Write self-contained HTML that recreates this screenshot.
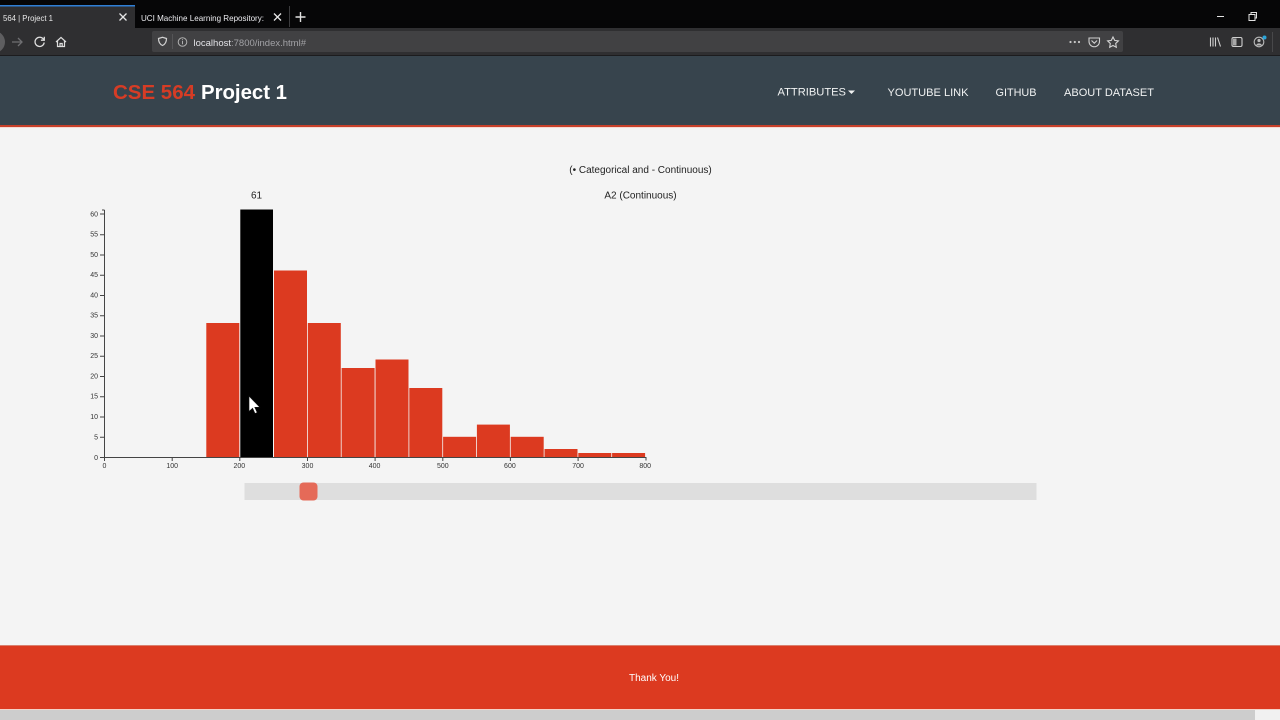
<!DOCTYPE html>
<html>
<head>
<meta charset="utf-8">
<style>
html,body{margin:0;padding:0;background:#f4f4f4;overflow:hidden}
body{width:1280px;height:720px;position:relative;font-family:"Liberation Sans",sans-serif}
svg{position:absolute;left:0;top:0}
</style>
</head>
<body>
<svg width="1280" height="720" viewBox="0 0 1280 720" font-family="Liberation Sans, sans-serif">
<!-- browser chrome -->
<rect x="0" y="0" width="1280" height="28" fill="#060607"/>
<rect x="0" y="28" width="1280" height="27" fill="#2f2f31"/>
<rect x="0" y="55" width="1280" height="1" fill="#1c1c1e"/>
<rect x="0" y="6" width="135" height="22" fill="#2f2f31"/>
<rect x="0" y="5" width="135" height="1.5" fill="#2f7fd6"/>
<text x="3" y="21" font-size="8.5" fill="#e8e8e8" textLength="50" lengthAdjust="spacingAndGlyphs">564 | Project 1</text>
<path d="M119.500 13.500l7 7M126.500 13.500l-7 7" stroke="#e6e6e6" stroke-width="1.300" fill="none"/>
<text x="141" y="21" font-size="8.500" fill="#ececf0" textLength="123" lengthAdjust="spacingAndGlyphs">UCI Machine Learning Repository: </text>
<path d="M274 13.500l7 7M281 13.500l-7 7" stroke="#e6e6e6" stroke-width="1.300" fill="none"/>
<rect x="289" y="6" width="1" height="21" fill="#3c3c3e"/>
<path d="M300.500 12v10M295.500 17h10" stroke="#e0e0e0" stroke-width="1.400" fill="none"/>
<!-- toolbar -->
<circle cx="-6" cy="42" r="11" fill="#5e5e60"/>
<path d="M12 42h10M18 38l4 4-4 4" stroke="#6f6f72" stroke-width="1.300" fill="none"/>
<path d="M43.600 39.500a4.600 4.600 0 1 0 .6 3M44.300 36.800v3.400h-3.400" stroke="#dedede" stroke-width="1.300" fill="none"/>
<path d="M56 42l5-4.600 5 4.600M57.500 41v5.500h7V41M60 46.500v-3h2.200v3" stroke="#dedede" stroke-width="1.200" fill="none"/>
<rect x="152" y="31" width="971" height="21" rx="2" fill="#414143"/>
<path d="M158.500 38.500l4-1.200 4 1.200c0 3.600-1.300 5.800-4 7-2.700-1.200-4-3.400-4-7z" stroke="#d0d0d0" stroke-width="1.200" fill="none"/>
<rect x="172" y="34" width="1" height="15" fill="#555557"/>
<circle cx="182.500" cy="42" r="4.300" stroke="#b0b0b0" stroke-width="1" fill="none"/>
<path d="M182.500 41v3.200M182.500 39.300v.9" stroke="#b0b0b0" stroke-width="1"/>
<text x="193.500" y="46" font-size="9.500"><tspan fill="#e4e4e8">localhost</tspan><tspan fill="#a2a2a6">:7800/index.html#</tspan></text>
<g fill="#c8c8c8"><circle cx="1070.500" cy="42" r="1.100"/><circle cx="1074.800" cy="42" r="1.100"/><circle cx="1079" cy="42" r="1.100"/></g>
<path d="M1089 38h10.500v3.500a5.250 5.250 0 0 1-10.500 0zM1091.500 40.500l2.800 2.700 2.800-2.700" stroke="#cfcfcf" stroke-width="1.100" fill="none"/>
<path d="M1113 37l1.700 3.400 3.700.5-2.700 2.600.6 3.700-3.300-1.700-3.300 1.700.6-3.700-2.700-2.600 3.700-.5z" stroke="#d4d4d4" stroke-width="1.100" fill="none"/>
<path d="M1210.500 37.500v9M1213 37.500v9M1215.500 37.500v9M1217.500 37.500l3 9" stroke="#cfcfcf" stroke-width="1.100" fill="none"/>
<rect x="1232" y="37.500" width="10" height="9" rx="1.500" stroke="#cfcfcf" stroke-width="1.100" fill="none"/>
<rect x="1233" y="38.500" width="3.500" height="7" fill="#a8a8a8"/>
<circle cx="1259" cy="42" r="4.800" stroke="#b8b8b8" stroke-width="1.100" fill="none"/>
<circle cx="1259" cy="40.500" r="1.600" fill="#b8b8b8"/>
<path d="M1256 45.500a3.200 3.200 0 0 1 6 0z" fill="#b8b8b8"/>
<circle cx="1264.500" cy="37.500" r="2" fill="#2aa4d8"/>
<rect x="1272" y="32" width="1" height="20" fill="#48484a"/>
<!-- window controls -->
<rect x="1217" y="16" width="7" height="1" fill="#e2e2e2"/>
<rect x="1249" y="14.500" width="6" height="6" fill="none" stroke="#e2e2e2" stroke-width="1"/>
<path d="M1251 14v-1.500h5.500v5.500H1255" fill="none" stroke="#e2e2e2" stroke-width="1"/>
<!-- navbar -->
<rect x="0" y="56" width="1280" height="69" fill="#37444d"/>
<rect x="0" y="125" width="1280" height="2" fill="#c7402a"/>
<rect x="0" y="127" width="1280" height="1" fill="#f6d9d2"/>
<text x="113" y="99" font-size="20.500" font-weight="bold" fill="#d63c25" textLength="82" lengthAdjust="spacingAndGlyphs">CSE 564</text>
<text x="201" y="99" font-size="20.500" font-weight="bold" fill="#ffffff" textLength="86" lengthAdjust="spacingAndGlyphs">Project 1</text>
<g font-size="11.200" fill="#f0f2f2">
<text x="777.500" y="95.500" textLength="68.500" lengthAdjust="spacingAndGlyphs">ATTRIBUTES</text>
<path d="M848 90.500h7l-3.500 3.500z" stroke="none"/>
<text x="887.500" y="96" textLength="81" lengthAdjust="spacingAndGlyphs">YOUTUBE LINK</text>
<text x="995.500" y="96" textLength="41" lengthAdjust="spacingAndGlyphs">GITHUB</text>
<text x="1064" y="96" textLength="90" lengthAdjust="spacingAndGlyphs">ABOUT DATASET</text>
</g>
<!-- headings -->
<text x="640.500" y="173" font-size="10" fill="#222" text-anchor="middle">(• Categorical and - Continuous)</text>
<text x="640.500" y="198.500" font-size="10" fill="#222" text-anchor="middle">A2 (Continuous)</text>
<text x="256.500" y="198.500" font-size="10" fill="#222" text-anchor="middle">61</text>
<!-- bars -->
<g fill="#dc3a20">
<rect x="206.300" y="323" width="33" height="134"/>
<rect x="274" y="270.500" width="33" height="186.500"/>
<rect x="307.800" y="323" width="33" height="134"/>
<rect x="341.600" y="368" width="33" height="89"/>
<rect x="375.500" y="359.500" width="33" height="97.500"/>
<rect x="409.300" y="388" width="33" height="69"/>
<rect x="443.100" y="436.800" width="33" height="20.200"/>
<rect x="476.900" y="424.600" width="33" height="32.400"/>
<rect x="510.700" y="436.800" width="33" height="20.200"/>
<rect x="544.500" y="449" width="33" height="8"/>
<rect x="578.300" y="453" width="33" height="4"/>
<rect x="612.100" y="453" width="33" height="4"/>
</g>
<rect x="240.300" y="209.500" width="32.700" height="247.500" fill="#000"/>
<!-- axes -->
<g stroke="#444" stroke-width="1" fill="none">
<path d="M104.500 210v247.500h541.500v3"/>
<path d="M100 457.500h4.500M100 437.300h4.500M100 417h4.500M100 396.800h4.500M100 376.500h4.500M100 356.300h4.500M100 336h4.500M100 315.800h4.500M100 295.500h4.500M100 275.300h4.500M100 255h4.500M100 234.800h4.500M100 214h4.500"/>
<path d="M102 210h2.500"/>
<path d="M104.500 457.500v3.500M172.200 457.500v3.500M239.800 457.500v3.500M307.500 457.500v3.500M375.100 457.500v3.500M442.800 457.500v3.500M510.400 457.500v3.500M578.100 457.500v3.500"/>
</g>
<g font-size="7" fill="#333" text-anchor="end">
<text x="98" y="460">0</text><text x="98" y="439.700">5</text><text x="98" y="419">10</text><text x="98" y="398.700">15</text><text x="98" y="378.500">20</text><text x="98" y="358.200">25</text><text x="98" y="338">30</text><text x="98" y="317.700">35</text><text x="98" y="297.500">40</text><text x="98" y="277.200">45</text><text x="98" y="257">50</text><text x="98" y="236.700">55</text><text x="98" y="216.500">60</text>
</g>
<g font-size="7" fill="#333" text-anchor="middle">
<text x="104.500" y="468">0</text><text x="172.200" y="468">100</text><text x="239.300" y="468">200</text><text x="307.500" y="468">300</text><text x="374.600" y="468">400</text><text x="442.800" y="468">500</text><text x="509.900" y="468">600</text><text x="578.100" y="468">700</text><text x="645.200" y="468">800</text>
</g>
<!-- cursor -->
<path d="M249 396v15.500l3.600-3.300 2.400 5.300 2.200-1-2.400-5.200h5z" fill="#fff" stroke="#111" stroke-width=".6"/>
<!-- slider -->
<rect x="244.500" y="483" width="792" height="17" fill="#dedede"/>
<rect x="299.500" y="482.500" width="18" height="18" rx="4" fill="#e56a58"/>
<!-- footer -->
<rect x="0" y="646" width="1280" height="63" fill="#dc3a20"/>
<rect x="0" y="645" width="1280" height="1" fill="#d9806f"/>
<rect x="0" y="709" width="1280" height="1" fill="#f3d3c8"/>
<rect x="0" y="710" width="1255" height="10" fill="#cdcdcd"/>
<rect x="1255" y="710" width="25" height="10" fill="#f1f1f1"/>
<text x="654" y="681" font-size="10" fill="#ffffff" text-anchor="middle">Thank You!</text>
</svg>
</body>
</html>
